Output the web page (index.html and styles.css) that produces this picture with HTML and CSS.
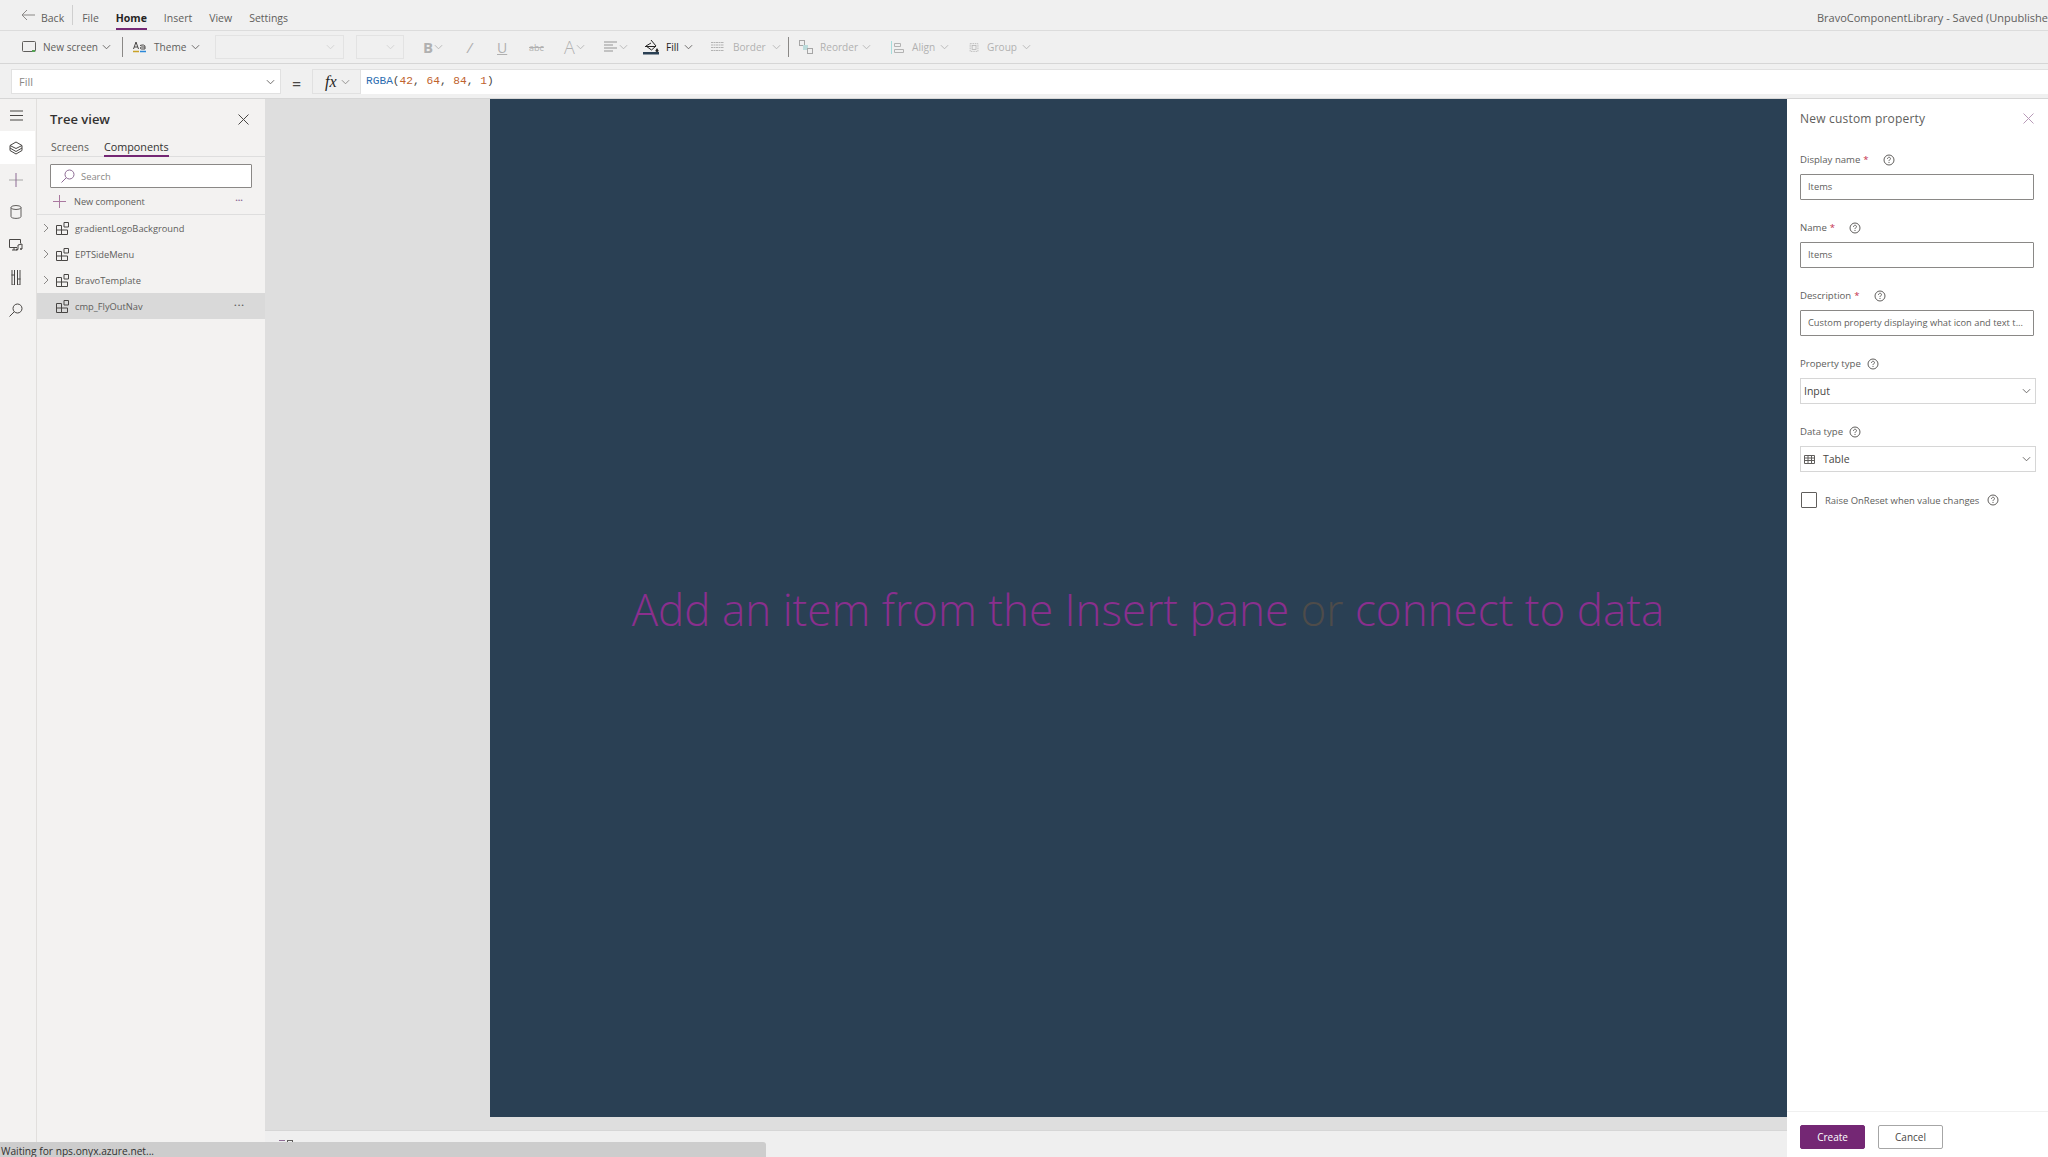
FILE: index.html
```html
<!DOCTYPE html>
<html lang="en">
<head>
    <meta charset="UTF-8">
    <title>BravoComponentLibrary - Saved (Unpublished)</title>
    <link rel="stylesheet" href="styles.css">
</head>
<body>
    <svg class="defs" aria-hidden="true">
        <symbol id="chev" viewBox="0 0 10 6"><path d="M1 1l4 4 4-4" fill="none" stroke="currentColor"/></symbol>
        <symbol id="help" viewBox="0 0 12 12"><circle cx="6" cy="6" r="5" fill="none" stroke="#605e5c"/><path d="M4.5 4.8c0-2 3-2 3-.2 0 1-1.500 1.200-1.500 2.500M6 8v1" fill="none" stroke="#605e5c"/></symbol>
        <symbol id="comp" viewBox="0 0 13 13"><path d="M.5 3.500h5v9h-5zM5.500 8h6v4.500h-6zM.5 8h5M8 .5h4.500V5H8z" fill="none" stroke="#484644"/></symbol>
    </svg>

    <!-- menu -->
    <header class="menu-bar">
        <svg class="back-arrow" width="14" height="12" viewBox="0 0 14 12"><path d="M6 1L1 6l5 5M1 6h13" fill="none" stroke="#8a8886"/></svg>
        <span class="menu-item back">Back</span>
        <span class="menu-sep"></span>
        <span class="menu-item">File</span>
        <span class="menu-item active">Home</span>
        <span class="menu-item">Insert</span>
        <span class="menu-item">View</span>
        <span class="menu-item">Settings</span>
        <span class="doc-title">BravoComponentLibrary - Saved (Unpublished)</span>
    </header>

    <!-- ribbon -->
    <div class="ribbon">
        <span class="rb on w-screen">
            <svg width="14" height="12" viewBox="0 0 14 12"><rect x=".5" y=".5" width="13" height="10" rx="1" fill="none" stroke="#605e5c"/><rect x="10" y="9" width="3" height="2" fill="#54a454"/></svg>
            New screen <svg class="chev"><use href="#chev"/></svg>
        </span>
        <span class="rb-sep first"></span>
        <span class="rb on w-theme">
            <svg width="13" height="12" viewBox="0 0 13 12"><path d="M.5 8L3 1l2.500 7M1.300 6h3.400" fill="none" stroke="#484644"/><path d="M7 4.500c3-1 5-.5 5 1V8H8.500C7 8 7 6 8.500 6H12" fill="none" stroke="#484644"/><path d="M0 10.500h6" stroke="#c9a227" stroke-width="1.500"/><path d="M7 10.500h6" stroke="#2b88d8" stroke-width="1.500"/></svg>
            Theme <svg class="chev"><use href="#chev"/></svg>
        </span>
        <span class="rb-select wide"><svg class="chev"><use href="#chev"/></svg></span>
        <span class="rb-select small"><svg class="chev"><use href="#chev"/></svg></span>
        <span class="rb glyph bold">B<svg class="chev"><use href="#chev"/></svg></span>
        <span class="rb glyph italic">/</span>
        <span class="rb glyph under">U</span>
        <span class="rb glyph strike">abc</span>
        <span class="rb glyph big-a">A<svg class="chev"><use href="#chev"/></svg></span>
        <span class="rb glyph align-btn">
            <svg width="13" height="12" viewBox="0 0 13 12"><path d="M0 1h13M0 4h9M0 7h13M0 10h9" stroke="#b3b3b3" stroke-width="1.500"/></svg>
            <svg class="chev"><use href="#chev"/></svg>
        </span>
        <span class="rb on w-fill">
            <svg width="17" height="16" viewBox="0 0 17 16"><path d="M8 1l5 6-4.500 4L3 7l5-3" fill="none" stroke="#252423"/><path d="M2 7.500h11" stroke="#252423"/><path d="M14 9l1.500 2.500a1.500 1.500 0 1 1-3 0z" fill="#252423"/><rect y="13" width="16" height="2.500" fill="#2a4054"/></svg>
            <span class="fill-label">Fill</span> <svg class="chev"><use href="#chev"/></svg>
        </span>
        <span class="rb w-border">
            <svg width="13" height="10" viewBox="0 0 13 10"><path d="M0 .5h13M0 3h13M0 5.500h13M0 8.500h13" stroke="#b3b3b3" stroke-dasharray="2 .5"/></svg>
            Border <svg class="chev"><use href="#chev"/></svg>
        </span>
        <span class="rb-sep second"></span>
        <span class="rb w-reorder">
            <svg width="14" height="14" viewBox="0 0 14 14"><rect x=".5" y=".5" width="5" height="5" fill="none" stroke="#a6a6a6"/><rect x="4" y="5" width="5" height="5" fill="#bcdcdc"/><rect x="8.500" y="8.500" width="5" height="5" fill="none" stroke="#a6a6a6"/></svg>
            Reorder <svg class="chev"><use href="#chev"/></svg>
        </span>
        <span class="rb w-align">
            <svg width="13" height="13" viewBox="0 0 13 13"><path d="M.5 0v13" stroke="#a6dcdc"/><path d="M3.500 2.500h6v3h-6zM3.500 8.500h9v3h-9z" fill="none" stroke="#b3b3b3"/></svg>
            Align <svg class="chev"><use href="#chev"/></svg>
        </span>
        <span class="rb w-group">
            <svg width="13" height="13" viewBox="0 0 13 13"><rect x="1.500" y="1.500" width="10" height="10" fill="none" stroke="#b3b3b3" stroke-dasharray="2 1"/><rect x="4" y="4" width="5" height="5" fill="none" stroke="#b3b3b3"/></svg>
            Group <svg class="chev"><use href="#chev"/></svg>
        </span>
    </div>

    <!-- formula bar -->
    <div class="formula-bar">
        <span class="prop-select">Fill<svg class="chev"><use href="#chev"/></svg></span>
        <span class="equals">=</span>
        <span class="fx-btn"><i>fx</i><svg class="chev"><use href="#chev"/></svg></span>
        <code class="formula"><span class="fn">RGBA</span>(<span class="num">42</span>, <span class="num">64</span>, <span class="num">84</span>, <span class="num">1</span>)</code>
    </div>

    <main class="workspace">
        <!-- left rail -->
        <nav class="rail">
            <span class="rail-btn"><svg width="15" height="11" viewBox="0 0 15 11"><path d="M1 1h13M1 5.500h13M1 10h13" stroke="#484644" stroke-width="1.200"/></svg></span>
            <span class="rail-btn current"><svg width="14" height="14" viewBox="0 0 14 14"><path d="M7 1l6 3.500v5L7 13 1 9.500v-5zM1 4.500l6 3 6-3M1 7l6 3.500L13 7" fill="none" stroke="#484644"/></svg></span>
            <span class="rail-btn"><svg width="14" height="14" viewBox="0 0 14 14"><path d="M0 7h14" stroke="#a6a6a6"/><path d="M7 0v14" stroke="#8d6b94"/></svg></span>
            <span class="rail-btn"><svg width="12" height="14" viewBox="0 0 12 14"><ellipse cx="6" cy="2.500" rx="5" ry="2" fill="none" stroke="#605e5c"/><path d="M1 2.500v9c0 2.500 10 2.500 10 0v-9" fill="none" stroke="#605e5c"/></svg></span>
            <span class="rail-btn"><svg width="14" height="13" viewBox="0 0 14 13"><path d="M8 9.500H.5v-8h11v4M3 12h5M5 10v2" fill="none" stroke="#484644"/><path d="M9 11.500V7l4-1v5" fill="none" stroke="#484644"/><circle cx="8" cy="11.500" r="1" fill="#484644"/><circle cx="12" cy="11" r="1" fill="#484644"/></svg></span>
            <span class="rail-btn"><svg width="10" height="15" viewBox="0 0 10 15"><path d="M1 0v15h2.500V0M6.500 0v15H9V0M.5 5h3.500M6 9h3.500" fill="none" stroke="#484644"/></svg></span>
            <span class="rail-btn"><svg width="14" height="14" viewBox="0 0 14 14"><circle cx="8.500" cy="5.500" r="4.500" fill="none" stroke="#484644"/><path d="M5.300 8.700L.5 13.500" stroke="#484644"/></svg></span>
        </nav>

        <!-- tree view -->
        <aside class="tree">
            <div class="tree-head">
                <h2>Tree view</h2>
                <svg width="11" height="11" viewBox="0 0 11 11"><path d="M.5.5l10 10M10.500.5l-10 10" stroke="#484644"/></svg>
            </div>
            <div class="tabs">
                <span class="tab">Screens</span>
                <span class="tab selected">Components</span>
            </div>
            <div class="search">
                <svg width="14" height="14" viewBox="0 0 14 14"><circle cx="8.500" cy="5.500" r="4.500" fill="none" stroke="#8d6b94"/><path d="M5.300 8.700L.5 13.500" stroke="#8d6b94"/></svg>
                <span>Search</span>
            </div>
            <div class="new-comp">
                <svg width="13" height="13" viewBox="0 0 13 13"><path d="M0 6.500h13M6.500 0v13" stroke="#a9789f"/></svg>
                <span>New component</span>
                <b class="dots small-dots">...</b>
            </div>
            <ul class="comp-list">
                <li><svg class="twist" width="6" height="10" viewBox="0 0 6 10"><path d="M1 1l4 4-4 4" fill="none" stroke="#8a8886"/></svg><svg class="comp-ic"><use href="#comp"/></svg>gradientLogoBackground</li>
                <li><svg class="twist" width="6" height="10" viewBox="0 0 6 10"><path d="M1 1l4 4-4 4" fill="none" stroke="#8a8886"/></svg><svg class="comp-ic"><use href="#comp"/></svg>EPTSideMenu</li>
                <li><svg class="twist" width="6" height="10" viewBox="0 0 6 10"><path d="M1 1l4 4-4 4" fill="none" stroke="#8a8886"/></svg><svg class="comp-ic"><use href="#comp"/></svg>BravoTemplate</li>
                <li class="picked"><span class="twist-gap"></span><svg class="comp-ic"><use href="#comp"/></svg>cmp_FlyOutNav<b class="dots">...</b></li>
            </ul>
        </aside>

        <!-- canvas -->
        <section class="canvas-area">
            <div class="stage">
                <div class="screen">
                    <p class="hint">Add an item from the Insert pane <span class="or">or</span> connect to data</p>
                </div>
            </div>
            <div class="canvas-foot">
                <svg width="14" height="12" viewBox="0 0 14 12"><path d="M0 .5h6M0 3h6" stroke="#8d6b94"/><rect x="8.500" y=".5" width="5" height="8" fill="none" stroke="#605e5c"/></svg>
            </div>
        </section>

        <!-- property panel -->
        <aside class="panel">
            <div class="panel-body">
                <div class="panel-head">
                    <h3>New custom property</h3>
                    <svg width="11" height="11" viewBox="0 0 11 11"><path d="M.5.5l10 10M10.500.5l-10 10" stroke="#b79ab7"/></svg>
                </div>
                <div class="field">
                    <label>Display name <em>*</em><svg class="help gap-l"><use href="#help"/></svg></label>
                    <div class="text-input">Items</div>
                </div>
                <div class="field">
                    <label>Name <em>*</em><svg class="help gap-m"><use href="#help"/></svg></label>
                    <div class="text-input">Items</div>
                </div>
                <div class="field">
                    <label>Description <em>*</em><svg class="help gap-l"><use href="#help"/></svg></label>
                    <div class="text-input">Custom property displaying what icon and text t...</div>
                </div>
                <div class="field">
                    <label>Property type<svg class="help gap-s"><use href="#help"/></svg></label>
                    <div class="drop">Input<svg class="chev"><use href="#chev"/></svg></div>
                </div>
                <div class="field">
                    <label>Data type<svg class="help gap-s"><use href="#help"/></svg></label>
                    <div class="drop">
                        <svg class="tbl" width="11" height="9" viewBox="0 0 11 9"><path d="M.5.5h10v8H.5zM.5 3h10M.5 5.500h10M4 .5v8M7.500.5v8" fill="none" stroke="#605e5c"/></svg>
                        Table<svg class="chev"><use href="#chev"/></svg>
                    </div>
                </div>
                <div class="check-row">
                    <span class="box"></span>
                    <span>Raise OnReset when value changes</span>
                    <svg class="help"><use href="#help"/></svg>
                </div>
            </div>
            <div class="panel-foot">
                <span class="btn primary">Create</span>
                <span class="btn">Cancel</span>
            </div>
        </aside>
    </main>

    <!-- browser status bubble -->
    <div class="status">Waiting for nps.onyx.azure.net...</div>
</body>
</html>
```

FILE: styles.css
```css
* {
    box-sizing: border-box;
}

body {
    margin: 0;
    height: 1157px;
    overflow: hidden;
    position: relative;
    display: flex;
    flex-direction: column;
    background: #f0f0f0;
    font-family: "Open Sans", "Noto Sans", sans-serif;
    font-size: 11px;
    color: #605e5c;
}

.defs {
    position: absolute;
    width: 0;
    height: 0;
}

.chev {
    width: 9px;
    height: 6px;
    flex: none;
}

/* menu */
.menu-bar {
    height: 31px;
    flex: none;
    display: flex;
    align-items: center;
    padding: 0 0 0 21px;
    border-bottom: 1px solid #dcdcdc;
}

.back-arrow {
    margin-right: 6px;
}

.menu-item {
    margin-right: 17px;
    height: 30px;
    line-height: 37px;
    font-size: 10.5px;
}

.menu-item.back {
    margin-right: 8px;
}

.menu-sep {
    width: 1px;
    height: 20px;
    background: #cfcfcf;
    margin-right: 9px;
}

.menu-item.active {
    font-weight: 700;
    color: #252423;
    border-bottom: 2px solid #742774;
}

.doc-title {
    margin-left: auto;
    width: 231px;
    padding-top: 4px;
    overflow: hidden;
    white-space: nowrap;
    font-size: 11px;
}

/* ribbon */
.ribbon {
    height: 33px;
    flex: none;
    display: flex;
    align-items: center;
    padding-left: 22px;
    border-bottom: 1px solid #d6d6d6;
    color: #b0b0b0;
    font-size: 10.1px;
}

.rb {
    display: flex;
    align-items: center;
    gap: 7px;
    white-space: nowrap;
}

.rb .chev {
    margin-left: -3px;
    color: #b3b3b3;
}

.rb.on {
    color: #605e5c;
}

.rb.on .chev {
    color: #605e5c;
}

.w-screen { width: 100px; }
.w-theme { width: 82px; gap: 8px; }
.w-fill { width: 68px; gap: 6px; }
.w-fill .chev { margin-left: -1px; }
.w-border { width: 77px; gap: 9px; }
.w-reorder { width: 92px; }
.w-align { width: 78px; gap: 8px; }
.w-group { width: 62px; gap: 8px; }
.fill-label { color: #252423; }

.rb-sep {
    width: 1px;
    height: 20px;
    background: #8a8886;
}

.rb-sep.first,
.rb-sep.second {
    margin-right: 10px;
}

.rb-select {
    height: 24px;
    border: 1px solid #e3e3e3;
    display: flex;
    align-items: center;
    justify-content: flex-end;
    padding-right: 8px;
    color: #d0d0d0;
}

.rb-select.wide { width: 129px; margin-right: 12px; }
.rb-select.small { width: 48px; margin-right: 19px; }

.glyph {
    gap: 1px;
    font-size: 15px;
}

.glyph .chev {
    margin-left: 0;
}

.bold { width: 44px; font-weight: 700; }
.italic { width: 30px; font-style: italic; }
.under { width: 32px; text-decoration: underline; font-size: 14px; }
.strike { width: 35px; font-size: 9px; text-decoration: line-through; }
.big-a { width: 40px; font-size: 18px; font-weight: 300; }
.align-btn { width: 39px; gap: 2px; }

/* formula bar */
.formula-bar {
    height: 35px;
    flex: none;
    display: flex;
    align-items: flex-start;
    padding: 5px 0 0 11px;
    border-bottom: 1px solid #d6d6d6;
}

.prop-select {
    width: 270px;
    height: 25px;
    background: #fff;
    border: 1px solid #e1e1e1;
    display: flex;
    align-items: center;
    justify-content: space-between;
    padding: 0 5px 0 7px;
    color: #8a8886;
}

.prop-select .chev {
    color: #605e5c;
}

.equals {
    width: 31px;
    text-align: center;
    font-size: 16px;
    line-height: 31px;
    color: #484644;
}

.fx-btn {
    width: 49px;
    height: 25px;
    flex: none;
    display: flex;
    align-items: center;
    gap: 4px;
    padding-left: 12px;
    border: 1px solid #e1e1e1;
    color: #252423;
}

.fx-btn i {
    font-family: "Liberation Serif", serif;
    font-size: 16px;
}

.fx-btn .chev {
    color: #8a8886;
}

.formula {
    flex: 1;
    height: 25px;
    background: #fff;
    border-top: 1px solid #e1e1e1;
    padding-left: 5px;
    font-family: "Liberation Mono", monospace;
    font-size: 11.2px;
    line-height: 23px;
    color: #484644;
}

.fn { color: #2b6cb0; }
.num { color: #c0622d; }

/* workspace */
.workspace {
    flex: 1;
    min-height: 0;
    display: flex;
}

.rail {
    width: 37px;
    flex: none;
    background: #f3f2f1;
    border-right: 1px solid #e1dfdd;
}

.rail-btn {
    width: 35px;
    height: 32.4px;
    padding-right: 3px;
    display: flex;
    align-items: center;
    justify-content: center;
}

.rail-btn.current {
    background: #fff;
}

.tree {
    width: 228px;
    flex: none;
    background: #f3f2f1;
}

.tree-head {
    height: 40px;
    display: flex;
    align-items: center;
    justify-content: space-between;
    padding: 0 16px 0 13px;
}

.tree-head h2 {
    margin: 0;
    font-size: 13px;
    font-weight: 600;
    color: #323130;
}

.tabs {
    height: 18px;
    display: flex;
    gap: 15px;
    padding-left: 14px;
    border-bottom: 1px solid #dedede;
}

.tab {
    height: 18px;
    line-height: 16px;
    font-size: 10.4px;
}

.tab.selected {
    font-size: 10.8px;
    color: #323130;
    border-bottom: 2px solid #742774;
}

.search {
    width: 202px;
    height: 24px;
    margin: 7px 0 0 13px;
    background: #fff;
    border: 1px solid #8a8886;
    border-radius: 1px;
    display: flex;
    align-items: center;
    gap: 6px;
    padding-left: 10px;
    font-size: 9.4px;
    color: #8a8886;
}

.new-comp {
    height: 27px;
    display: flex;
    align-items: center;
    gap: 8px;
    padding: 0 22px 0 16px;
    border-bottom: 1px solid #dedede;
    font-size: 9.2px;
}

.dots {
    margin-left: auto;
    font-weight: 700;
    letter-spacing: 1px;
    line-height: 6px;
    height: 12px;
    color: #605e5c;
}

.small-dots {
    letter-spacing: 0;
    color: #8d6b94;
}

.comp-list {
    list-style: none;
    margin: 0;
    padding: 0;
}

.comp-list li {
    height: 26px;
    display: flex;
    align-items: center;
    padding: 0 20px 0 6px;
    font-size: 9.3px;
}

.comp-list li.picked {
    background: #d9d9d9;
}

.twist-gap,
.twist {
    width: 6px;
    margin-right: 7px;
    flex: none;
}

.comp-ic {
    width: 13px;
    height: 13px;
    margin-right: 6px;
    flex: none;
}

/* canvas */
.canvas-area {
    flex: 1;
    min-width: 0;
    display: flex;
    flex-direction: column;
    background: #dedede;
}

.stage {
    flex: 1;
    min-height: 0;
    padding-left: 225px;
    overflow: hidden;
}

.screen {
    width: 1316px;
    height: 1018px;
    padding-top: 2px;
    background: #2a4054;
    display: flex;
    align-items: center;
    justify-content: center;
}

.hint {
    margin: 0;
    white-space: nowrap;
    font-family: "Open Sans", sans-serif;
    font-weight: 300;
    font-size: 44px;
    color: #8a2f8e;
}

.hint .or {
    color: #4e4c4a;
}

.canvas-foot {
    height: 27px;
    flex: none;
    padding: 9px 0 0 14px;
    background: #efefef;
    border-top: 1px solid #d6d6d6;
}

/* property panel */
.panel {
    width: 261px;
    flex: none;
    display: flex;
    flex-direction: column;
    background: #fff;
}

.panel-body {
    flex: 1;
    padding: 0 12px 0 13px;
}

.panel-head {
    height: 38px;
    display: flex;
    align-items: center;
    justify-content: space-between;
    padding-right: 2px;
}

.panel-head h3 {
    margin: 0;
    font-size: 12px;
    font-weight: 400;
    letter-spacing: .2px;
    color: #605e5c;
}

.field {
    height: 68px;
    padding-top: 15px;
}

.field label {
    height: 15px;
    display: flex;
    align-items: center;
    font-size: 9.6px;
    color: #605e5c;
}

.field em {
    font-style: normal;
    color: #c4314b;
    margin-left: 3px;
}

.help {
    width: 12px;
    height: 12px;
    flex: none;
}

.gap-l { margin-left: 14px; }
.gap-m { margin-left: 14px; }
.gap-s { margin-left: 6px; }

.text-input {
    width: 234px;
    height: 26px;
    margin-top: 7px;
    border: 1px solid #8a8886;
    border-radius: 1px;
    padding-left: 7px;
    line-height: 24px;
    font-size: 9.3px;
    white-space: nowrap;
    overflow: hidden;
    color: #605e5c;
}

.drop {
    width: 236px;
    height: 26px;
    margin-top: 7px;
    border: 1px solid #d6d6d6;
    display: flex;
    align-items: center;
    padding: 0 4px 0 3px;
    font-size: 10.5px;
    color: #484644;
}

.drop .chev {
    margin-left: auto;
    color: #605e5c;
}

.tbl {
    margin-right: 8px;
}

.check-row {
    display: flex;
    align-items: center;
    gap: 8px;
    margin: 15px 0 0 1px;
    font-size: 9.45px;
}

.box {
    width: 16px;
    height: 16px;
    border: 1px solid #605e5c;
    border-radius: 1px;
}

.panel-foot {
    height: 46px;
    flex: none;
    display: flex;
    gap: 13px;
    padding: 13px 0 0 13px;
    border-top: 1px solid #f0f0f0;
}

.btn {
    width: 65px;
    height: 24px;
    border: 1px solid #a6a6a6;
    border-radius: 2px;
    text-align: center;
    line-height: 22px;
    font-size: 10px;
    color: #484644;
}

.btn.primary {
    background: #742774;
    border-color: #742774;
    color: #fff;
}

/* browser status bubble */
.status {
    position: absolute;
    left: 0;
    bottom: 0;
    width: 766px;
    height: 15px;
    background: #cdcdcd;
    border-top-right-radius: 3px;
    padding-left: 1px;
    line-height: 18px;
    font-size: 10.2px;
    color: #323130;
}
```
